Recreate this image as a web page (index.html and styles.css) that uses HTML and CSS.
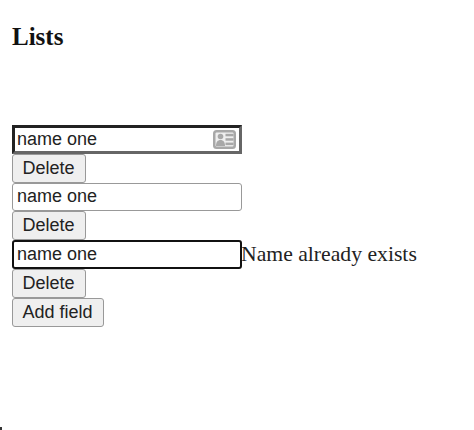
FILE: index.html
```html
<!DOCTYPE html>
<html lang="en">
<head>
    <meta charset="UTF-8">
    <meta name="viewport" content="width=device-width, initial-scale=1.0">
    <title>Lists</title>
    <link rel="stylesheet" href="styles.css">
</head>
<body>
    <h4 class="title">Lists</h4>
    <form class="list">
        <div class="field-row">
            <div class="field field-inset">
                <input type="text" value="name one">
                <svg class="card-icon" viewBox="0 0 23 19" width="23" height="19" aria-hidden="true">
                    <rect x="0" y="0" width="23" height="19" rx="3.500" fill="#a8a8a8"/>
                    <rect x="2.500" y="2.500" width="18" height="14" rx="1" fill="#efefef"/>
                    <circle cx="7.500" cy="6.500" r="2.800" fill="#a8a8a8"/>
                    <path d="M3 16c0-4 1.700-6 4.500-6s4.500 2 4.500 6z" fill="#a8a8a8"/>
                    <rect x="12.500" y="3.800" width="8" height="2.500" fill="#a8a8a8"/>
                    <rect x="12.500" y="8.200" width="8" height="2.500" fill="#a8a8a8"/>
                    <rect x="12.500" y="12.600" width="8" height="2.500" fill="#a8a8a8"/>
                </svg>
            </div>
        </div>
        <div class="button-row"><button type="button">Delete</button></div>
        <div class="field-row">
            <div class="field"><input type="text" value="name one"></div>
        </div>
        <div class="button-row"><button type="button">Delete</button></div>
        <div class="field-row">
            <div class="field field-error"><input type="text" value="name one"></div>
            <span class="error">Name already exists</span>
        </div>
        <div class="button-row"><button type="button">Delete</button></div>
        <div class="button-row"><button type="button">Add field</button></div>
    </form>
</body>
</html>
```

FILE: styles.css
```css
body {
    font-family: "Liberation Serif", serif;
    color: #222;
    background-color: #fff;
    margin: 0;
    padding: 12px;
}
body::after {
    content: "";
    position: fixed;
    left: 0;
    bottom: 0;
    width: 2px;
    height: 3px;
    background-color: #333;
}
.title {
    font-size: 25px;
    line-height: 27px;
    font-weight: bold;
    color: #111;
    margin: 11px 0 0;
}
.list {
    margin-top: 75px;
}
.field-row {
    display: flex;
    align-items: center;
    height: 28.800px;
}
.field {
    display: flex;
    align-items: center;
    box-sizing: border-box;
    width: 230px;
    height: 28.800px;
    padding: 0 3px 0 4px;
    background-color: #fff;
    border: 1.5px solid #999;
    border-radius: 3px;
}
.field input {
    flex: 1;
    min-width: 0;
    padding: 0;
    border: none;
    outline: none;
    background: none;
    font-family: "Liberation Sans", Arial, sans-serif;
    font-size: 18px;
    color: #222;
}
.field-inset {
    border-width: 3px;
    border-style: solid;
    border-color: #222 #666 #666 #222;
    border-radius: 0;
    padding-left: 2px;
}
.field-error {
    border: 2px solid #111;
    padding-left: 3px;
}
.card-icon {
    flex-shrink: 0;
}
.error {
    margin-left: -1px;
    font-size: 21.700px;
    color: #222;
}
.button-row {
    height: 28.800px;
}
.button-row button {
    box-sizing: border-box;
    height: 28.800px;
    padding: 0 10.500px 0 9.500px;
    font-family: "Liberation Sans", Arial, sans-serif;
    font-size: 18px;
    color: #222;
    background-color: #efefef;
    border: 1.5px solid #999;
    border-radius: 3px;
}
```
